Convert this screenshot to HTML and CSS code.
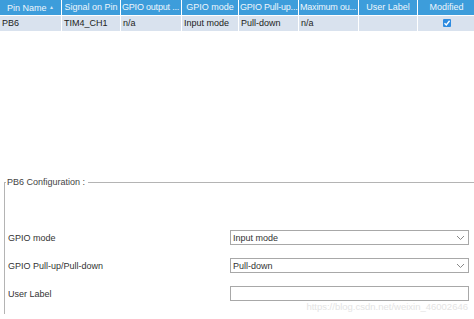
FILE: index.html
```html
<!DOCTYPE html>
<html lang="en">
<head>
<meta charset="UTF-8">
<title>PB6 Configuration</title>
<link rel="stylesheet" href="styles.css">
</head>
<body>
<div class="pin-table">
  <div class="row head">
    <div class="cell">Pin Name <span class="sort">&#9650;</span></div>
    <div class="cell">Signal on Pin</div>
    <div class="cell left">GPIO output ...</div>
    <div class="cell">GPIO mode</div>
    <div class="cell left">GPIO Pull-up...</div>
    <div class="cell left">Maximum ou...</div>
    <div class="cell">User Label</div>
    <div class="cell">Modified</div>
  </div>
  <div class="row data">
    <div class="cell">PB6</div>
    <div class="cell">TIM4_CH1</div>
    <div class="cell">n/a</div>
    <div class="cell">Input mode</div>
    <div class="cell">Pull-down</div>
    <div class="cell">n/a</div>
    <div class="cell"></div>
    <div class="cell center"><span class="check"><svg width="8" height="8" viewBox="0 0 8 8"><path d="M1.5 4.2 L3.3 6 L6.6 1.8" fill="none" stroke="#fff" stroke-width="1.4"/></svg></span></div>
  </div>
</div>

<fieldset class="config">
  <legend>PB6 Configuration :</legend>
  <div class="field">
    <label>GPIO mode</label>
    <div class="select">Input mode<svg width="9" height="6" viewBox="0 0 9 6"><path d="M1 1 L4.5 4.5 L8 1" fill="none" stroke="#888" stroke-width="1"/></svg></div>
  </div>
  <div class="field">
    <label>GPIO Pull-up/Pull-down</label>
    <div class="select">Pull-down<svg width="9" height="6" viewBox="0 0 9 6"><path d="M1 1 L4.5 4.5 L8 1" fill="none" stroke="#888" stroke-width="1"/></svg></div>
  </div>
  <div class="field">
    <label>User Label</label>
    <div class="select"></div>
  </div>
</fieldset>
<div class="watermark">https://blog.csdn.net/weixin_46002646</div>
</body>
</html>
```

FILE: styles.css
```css
body {
  margin: 0;
  background: #fff;
  font-family: "Liberation Sans", Arial, sans-serif;
  font-size: 9px;
  color: #222;
  width: 474px;
  height: 319px;
  overflow: hidden;
  position: relative;
}

.pin-table {
  width: 474px;
}

.row {
  display: grid;
  grid-template-columns: 61px 58px 60px 56px 59px 59px 58px 57px;
  column-gap: 1px;
}

.head {
  background: #fff;
  height: 15px;
  margin-bottom: 1px;
}

.head .cell {
  background: #3d9ddb;
  color: #eef6fc;
  text-align: center;
  line-height: 15px;
  white-space: nowrap;
  overflow: hidden;
}

.head .left {
  text-align: left;
  padding-left: 1px;
  letter-spacing: -0.2px;
}

.sort {
  font-size: 5px;
  color: #cfe6f6;
  vertical-align: 2px;
}

.data {
  height: 15px;
  background: #fff;
}

.data .cell {
  background: #d9e2ee;
  line-height: 15px;
  padding-left: 2px;
  white-space: nowrap;
  overflow: hidden;
}

.data .center {
  text-align: center;
  padding-left: 0;
}

.check {
  display: inline-block;
  width: 8px;
  height: 8px;
  background: #2d8be0;
  border-radius: 1px;
  vertical-align: -1px;
}

.check svg {
  display: block;
}

.config {
  box-sizing: border-box;
  margin: 146px 0 0 4px;
  padding: 43px 5px 0 3px;
  border: none;
  border-top: 1px solid #b4b4b4;
  border-left: 1px solid #b4b4b4;
  height: 137px;
  color: #333;
}

.config legend {
  padding: 0 3px 0 1px;
  margin-left: -2px;
  font-size: 9px;
  color: #444;
}

.field {
  display: flex;
  align-items: center;
  justify-content: space-between;
  height: 15px;
  margin-bottom: 13px;
}

.field label {
  font-size: 9px;
}

.select {
  width: 232px;
  height: 13px;
  border: 1px solid #a8a8a8;
  display: flex;
  align-items: center;
  justify-content: space-between;
  padding: 0 3px 0 2px;
  font-size: 9px;
}

.watermark {
  position: absolute;
  right: 6px;
  bottom: 7px;
  color: #e4e4e4;
  font-size: 9.5px;
}
```
